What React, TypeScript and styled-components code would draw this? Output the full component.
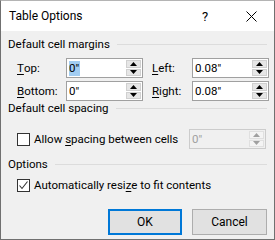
import React from "react";
import styled, { createGlobalStyle } from "styled-components";

const GlobalStyle = createGlobalStyle`
  html, body {
    margin: 0;
    padding: 0;
    background: #f0f0f0;
  }
  body {
    font-family: Roboto, "Liberation Sans", sans-serif;
    font-size: 11.5px;
    color: #000;
  }
`;

const Window = styled.div`
  width: 275px;
  height: 240px;
  box-sizing: border-box;
  border: 1px solid #707070;
  border-top-color: #b4b4b4;
  background: #f0f0f0;
  display: flex;
  flex-direction: column;
  overflow: hidden;
  white-space: nowrap;
`;

const TitleBar = styled.div`
  height: 30px;
  flex: none;
  background: #fff;
  display: flex;
  align-items: center;
  padding-left: 8px;
  .title {
    flex: 1;
    font-size: 12px;
  }
  .help {
    width: 46px;
    text-align: center;
    font-size: 13px;
  }
  .close {
    width: 46px;
    display: flex;
    justify-content: center;
  }
`;

const Body = styled.div`
  flex: 1;
  display: flex;
  flex-direction: column;
  padding: 6px 7px 0 7px;
`;

const GroupHeader = styled.div<{ $top?: number }>`
  display: flex;
  align-items: center;
  height: 14px;
  line-height: 14px;
  margin-top: ${(p) => p.$top ?? 0}px;
  &::after {
    content: "";
    flex: 1;
    height: 1px;
    background: #dcdcdc;
    margin-left: 7px;
  }
`;

const MarginGrid = styled.div`
  display: grid;
  grid-template-columns: 49px 77px 49px 77px;
  row-gap: 3px;
  padding-left: 9px;
  margin-top: 7px;
`;

const Label = styled.label<{ $indent?: boolean }>`
  display: flex;
  align-items: center;
  height: 20px;
  padding-left: ${(p) => (p.$indent ? 9 : 0)}px;
  u {
    text-decoration: underline;
    text-underline-offset: 2px;
  }
`;

const Spin = styled.div<{ $disabled?: boolean }>`
  box-sizing: border-box;
  height: 20px;
  border: 1px solid ${(p) => (p.$disabled ? "#cccccc" : "#a0a0a0")};
  background: ${(p) => (p.$disabled ? "#f0f0f0" : "#fff")};
  display: flex;
  align-items: stretch;
  padding: 0 1px 0 2px;
`;

const SpinText = styled.div<{ $disabled?: boolean; $selected?: boolean }>`
  flex: 1;
  display: flex;
  align-items: center;
  color: ${(p) => (p.$disabled ? "#a0a0a0" : "#000")};
  span {
    background: ${(p) => (p.$selected ? "#a2cdf2" : "transparent")};
    line-height: 15px;
    padding-right: 1px;
  }
`;

const SpinButtons = styled.div`
  width: 15px;
  display: flex;
  flex-direction: column;
  padding: 1px 0;
  gap: 1px;
`;

const SpinBtn = styled.div<{ $disabled?: boolean }>`
  flex: 1;
  box-sizing: border-box;
  background: ${(p) => (p.$disabled ? "#f4f4f4" : "#e6e6e6")};
  border: 1px solid ${(p) => (p.$disabled ? "#e0e0e0" : "#d0d0d0")};
  display: flex;
  align-items: center;
  justify-content: center;
`;

const CheckRow = styled.div<{ $top: number }>`
  display: flex;
  align-items: center;
  margin-top: ${(p) => p.$top}px;
  padding-left: 9px;
  height: 20px;
  u {
    text-decoration: underline;
    text-underline-offset: 2px;
  }
`;

const CheckBox = styled.div`
  width: 13px;
  height: 13px;
  box-sizing: border-box;
  border: 1px solid #333;
  background: #fff;
  margin-right: 4px;
  display: flex;
  align-items: center;
  justify-content: center;
  flex: none;
`;

const RightSpin = styled.div`
  margin-left: auto;
  width: 77px;
  margin-right: 1px;
`;

const Buttons = styled.div`
  display: flex;
  justify-content: flex-end;
  gap: 10px;
  margin-top: 14px;
`;

const Button = styled.div<{ $default?: boolean }>`
  box-sizing: border-box;
  width: ${(p) => (p.$default ? 74 : 75)}px;
  height: 26px;
  display: flex;
  align-items: center;
  justify-content: center;
  font-size: 12px;
  background: #e1e1e1;
  border: ${(p) => (p.$default ? "2px solid #0078d7" : "1px solid #adadad")};
`;

const Arrow = ({ up, color }: { up?: boolean; color: string }) => (
  <svg width="7" height="4" viewBox="0 0 7 4">
    <polygon points={up ? "0,4 7,4 3.5,0" : "0,0 7,0 3.5,4"} fill={color} />
  </svg>
);

const Spinner = ({
  value,
  disabled,
  selected,
}: {
  value: string;
  disabled?: boolean;
  selected?: boolean;
}) => {
  const c = disabled ? "#a0a0a0" : "#000";
  return (
    <Spin $disabled={disabled}>
      <SpinText $disabled={disabled} $selected={selected}>
        <span>{value}</span>
      </SpinText>
      <SpinButtons>
        <SpinBtn $disabled={disabled}>
          <Arrow up color={c} />
        </SpinBtn>
        <SpinBtn $disabled={disabled}>
          <Arrow color={c} />
        </SpinBtn>
      </SpinButtons>
    </Spin>
  );
};

const App = () => (
  <>
    <GlobalStyle />
    <Window>
      <TitleBar>
        <div className="title">Table Options</div>
        <div className="help">?</div>
        <div className="close">
          <svg width="11" height="11" viewBox="0 0 11 11">
            <path d="M0.5 0.5 L10.5 10.5 M10.5 0.5 L0.5 10.5" stroke="#000" strokeWidth="1" />
          </svg>
        </div>
      </TitleBar>
      <Body>
        <GroupHeader>Default cell margins</GroupHeader>
        <MarginGrid>
          <Label>
            <u>T</u>op:
          </Label>
          <Spinner value={'0"'} selected />
          <Label $indent>
            <u>L</u>eft:
          </Label>
          <Spinner value={'0.08"'} />
          <Label>
            <u>B</u>ottom:
          </Label>
          <Spinner value={'0"'} />
          <Label $indent>
            <u>R</u>ight:
          </Label>
          <Spinner value={'0.08"'} />
        </MarginGrid>
        <GroupHeader>Default cell spacing</GroupHeader>
        <CheckRow $top={14}>
          <CheckBox />
          <span>
            Allow <u>s</u>pacing between cells
          </span>
          <RightSpin>
            <Spinner value={'0"'} disabled />
          </RightSpin>
        </CheckRow>
        <GroupHeader $top={8}>Options</GroupHeader>
        <CheckRow $top={4}>
          <CheckBox>
            <svg width="11" height="11" viewBox="0 0 11 11">
              <polyline points="1.5,5.5 4,8.5 9.5,1.5" fill="none" stroke="#333" strokeWidth="1.1" />
            </svg>
          </CheckBox>
          <span>
            Automatically resi<u>z</u>e to fit contents
          </span>
        </CheckRow>
        <Buttons>
          <Button $default>OK</Button>
          <Button>Cancel</Button>
        </Buttons>
      </Body>
    </Window>
  </>
);

export default App;
